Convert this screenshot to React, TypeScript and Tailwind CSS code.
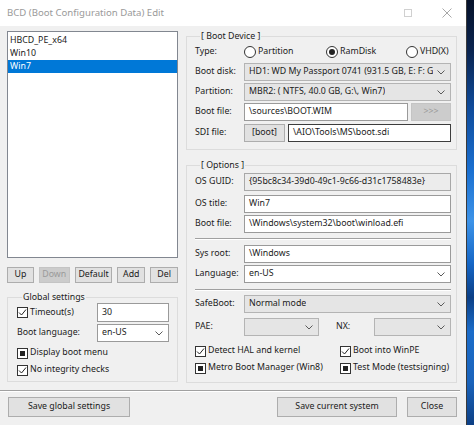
import type { ReactNode } from "react";

const font = { fontFamily: '"Noto Sans", "Open Sans", sans-serif' };

function Chevron() {
  return (
    <svg width="8" height="5" viewBox="0 0 8 5" className="shrink-0">
      <path d="M0.5 0.5 L4 4 L7.5 0.5" fill="none" stroke="#5a5a5a" strokeWidth="1" />
    </svg>
  );
}

function Check({ state, label }: { state: "on" | "mixed" | "off"; label: string }) {
  return (
    <div className="flex h-[12px] items-center gap-[2px] whitespace-nowrap">
      <span className="flex h-[11px] w-[11px] shrink-0 items-center justify-center border border-[#333] bg-white">
        {state === "on" && (
          <svg width="9" height="9" viewBox="0 0 9 9">
            <path d="M1 4.5 L3.5 7 L8 1.5" fill="none" stroke="#222" strokeWidth="1" />
          </svg>
        )}
        {state === "mixed" && <span className="h-[5px] w-[5px] bg-[#222]" />}
      </span>
      <span>{label}</span>
    </div>
  );
}

function Radio({ on, label }: { on?: boolean; label: string }) {
  return (
    <div className="flex items-center gap-[2px] whitespace-nowrap">
      <span className="flex h-[12px] w-[12px] items-center justify-center rounded-full border border-[#333] bg-white">
        {on && <span className="h-[6px] w-[6px] rounded-full bg-[#222]" />}
      </span>
      <span>{label}</span>
    </div>
  );
}

function Combo({ value, white, className = "" }: { value?: string; white?: boolean; className?: string }) {
  return (
    <div
      className={`flex h-[18px] items-center justify-between border pl-[4px] pr-[5px] ${
        white ? "border-[#9a9a9a] bg-white" : "border-[#b4b4b4] bg-[#e5e5e5]"
      } ${className}`}
    >
      <span className="truncate">{value}</span>
      <Chevron />
    </div>
  );
}

function Field({ value, grey, dark, className = "" }: { value: string; grey?: boolean; dark?: boolean; className?: string }) {
  return (
    <div
      className={`flex h-[18px] items-center truncate border pl-[4px] ${
        grey ? "border-[#a8a8a8] bg-[#ececec]" : "bg-white"
      } ${dark ? "border-[#3c3c3c]" : grey ? "" : "border-[#9a9a9a]"} ${className}`}
    >
      {value}
    </div>
  );
}

function Btn({ children, disabled, className = "" }: { children: ReactNode; disabled?: boolean; className?: string }) {
  return (
    <div
      className={`flex items-center justify-center border ${
        disabled ? "border-[#c4c4c4] bg-[#cccccc] text-[#9a9a9a]" : "border-[#adadad] bg-[#e1e1e1] text-[#1a1a1a]"
      } ${className}`}
    >
      {children}
    </div>
  );
}

function Row({ label, children, className = "" }: { label: string; children: ReactNode; className?: string }) {
  return (
    <div className={`flex items-center ${className}`}>
      <span className="w-[49px] shrink-0 whitespace-nowrap">{label}</span>
      <div className="flex min-w-0 flex-1 gap-[3px]">{children}</div>
    </div>
  );
}

function Group({ title, children, className = "" }: { title: string; children: ReactNode; className?: string }) {
  return (
    <div className={`flex flex-col border border-[#dcdcdc] ${className}`}>
      <span className="-mt-[7px] ml-[5px] w-fit bg-[#f0f0f0] px-[1px] leading-[12px]">{title}</span>
      {children}
    </div>
  );
}

function Sep({ className = "" }: { className?: string }) {
  return <div className={`h-[2px] border-t border-[#a0a0a0] border-b-white ${className}`} style={{ borderBottomWidth: 1 }} />;
}

export default function App() {
  return (
    <div className="flex h-[425px] w-[474px] overflow-hidden text-[8.8px] text-[#1a1a1a]" style={font}>
      <div className="flex w-[467px] shrink-0 flex-col border-r border-[#3a3a3a] bg-[#f0f0f0]">
        <div className="flex h-[26px] shrink-0 items-center bg-white pl-[7px] pr-[14px] text-[9.6px] text-[#9a9a9a]">
          <span className="flex-1">BCD (Boot Configuration Data) Edit</span>
          <span className="mr-[30px] h-[8px] w-[8px] border border-[#d0d0d0]" />
          <svg width="10" height="10" viewBox="0 0 10 10">
            <path d="M0.5 0.5 L9.5 9.5 M9.5 0.5 L0.5 9.5" stroke="#a8a8a8" strokeWidth="1" />
          </svg>
        </div>

        <div className="flex pl-[7px] pt-[5px]">
          <div className="flex w-[171px] shrink-0 flex-col">
            <div className="flex h-[227px] flex-col border border-[#828790] bg-white pt-[2px]">
              <div className="h-[13px] pl-[2px] leading-[13px]">HBCD_PE_x64</div>
              <div className="h-[13px] pl-[2px] leading-[13px]">Win10</div>
              <div className="h-[13px] bg-[#0078d7] pl-[2px] leading-[13px] text-white">Win7</div>
            </div>
            <div className="mt-[9px] flex h-[16px] gap-[5px]">
              <Btn className="w-[27px]">Up</Btn>
              <Btn disabled className="w-[31px]">Down</Btn>
              <Btn className="w-[38px]">Default</Btn>
              <Btn className="w-[28px]">Add</Btn>
              <Btn className="w-[28px]">Del</Btn>
            </div>
            <Group title="Global settings" className="mt-[14px] h-[85px] pl-[9px] pr-[8px]">
              <div className="flex h-[19px] items-center">
                <div className="w-[80px]">
                  <Check state="on" label="Timeout(s)" />
                </div>
                <Field value="30" className="h-[19px] flex-1" />
              </div>
              <div className="mt-[2px] flex items-center">
                <span className="w-[80px]">Boot language:</span>
                <Combo white value="en-US" className="flex-1" />
              </div>
              <div className="mt-[5px] flex flex-col gap-[5px]">
                <Check state="mixed" label="Display boot menu" />
                <Check state="on" label="No integrity checks" />
              </div>
            </Group>
          </div>

          <div className="ml-[8px] flex w-[271px] flex-col pt-[5px]">
            <Group title="[ Boot Device ]" className="h-[114px] pl-[8px] pr-[5px]">
              <Row label="Type:" className="mt-[1px] h-[18px]">
                <div className="flex flex-1 items-center">
                  <div className="w-[82px]">
                    <Radio label="Partition" />
                  </div>
                  <div className="w-[80px]">
                    <Radio on label="RamDisk" />
                  </div>
                  <Radio label="VHD(X)" />
                </div>
              </Row>
              <Row label="Boot disk:" className="mt-[2px]">
                <Combo value="HD1: WD My Passport 0741 (931.5 GB, E: F: G" className="flex-1" />
              </Row>
              <Row label="Partition:" className="mt-[2px]">
                <Combo value="MBR2: ( NTFS,  40.0 GB, G:\, Win7)" className="flex-1" />
              </Row>
              <Row label="Boot file:" className="mt-[2px]">
                <Field value="\sources\BOOT.WIM" className="flex-1" />
                <Btn disabled className="h-[18px] w-[40px]">
                  &gt;&gt;&gt;
                </Btn>
              </Row>
              <Row label="SDI file:" className="mt-[3px]">
                <Btn className="h-[18px] w-[41px]">[boot]</Btn>
                <Field dark value="\AIO\Tools\MS\boot.sdi" className="flex-1" />
              </Row>
            </Group>

            <Group title="[ Options ]" className="mt-[15px] h-[218px] pl-[8px] pr-[5px]">
              <Row label="OS GUID:" className="mt-[2px]">
                <Field grey value="{95bc8c34-39d0-49c1-9c66-d31c1758483e}" className="flex-1" />
              </Row>
              <Row label="OS title:" className="mt-[4px]">
                <Field value="Win7" className="flex-1" />
              </Row>
              <Row label="Boot file:" className="mt-[2px]">
                <Field value="\Windows\system32\boot\winload.efi" className="flex-1" />
              </Row>
              <Sep className="my-[5px]" />
              <Row label="Sys root:">
                <Field value="\Windows" className="flex-1" />
              </Row>
              <Row label="Language:" className="mt-[2px]">
                <Combo white value="en-US" className="flex-1" />
              </Row>
              <Sep className="mt-[6px] mb-[4px]" />
              <Row label="SafeBoot:">
                <Combo value="Normal mode" className="flex-1" />
              </Row>
              <Row label="PAE:" className="mt-[5px]">
                <div className="flex flex-1 items-center">
                  <Combo className="w-[75px]" />
                  <span className="ml-[17px] w-[38px]">NX:</span>
                  <Combo className="flex-1" />
                </div>
              </Row>
              <div className="mt-[9px] flex">
                <div className="w-[145px]">
                  <Check state="on" label="Detect HAL and kernel" />
                </div>
                <Check state="on" label="Boot into WinPE" />
              </div>
              <div className="mt-[5px] flex">
                <div className="w-[145px]">
                  <Check state="mixed" label="Metro Boot Manager (Win8)" />
                </div>
                <Check state="mixed" label="Test Mode (testsigning)" />
              </div>
            </Group>
          </div>
        </div>

        <Sep className="mt-[7px] w-[460px]" />
        <div className="mt-[5px] flex h-[20px] pl-[8px]">
          <Btn className="w-[122px]">Save global settings</Btn>
          <Btn className="ml-[147px] w-[120px]">Save current system</Btn>
          <Btn className="ml-[10px] w-[50px]">Close</Btn>
        </div>
      </div>
      <div className="flex-1 bg-[linear-gradient(to_bottom,#06122a_0%,#0a2450_12%,#0f4a99_25%,#1a6fd0_40%,#3d93e8_52%,#1566c6_62%,#0b3f86_70%,#1b6cc9_78%,#1a63bb_90%,#0d3f84_100%)]" />
    </div>
  );
}
